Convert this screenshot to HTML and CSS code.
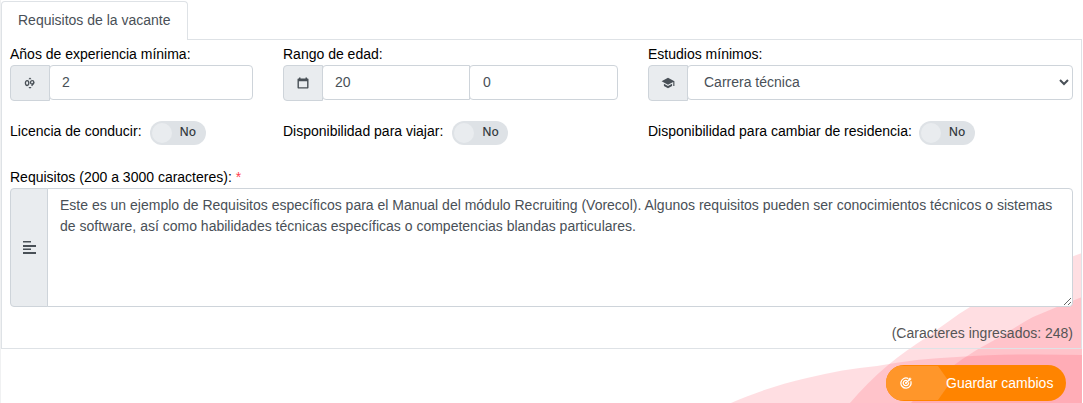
FILE: index.html
```html
<!DOCTYPE html>
<html lang="es">
<head>
<meta charset="utf-8">
<title>Requisitos de la vacante</title>
<link rel="stylesheet" href="styles.css">
</head>
<body>
<div class="page">
  <svg class="backdrop" viewBox="0 0 361 163" aria-hidden="true">
    <path d="M129 163C140 150 153 137 166 126C179 115 192 106 206 97C220 87 234 76 249 67C283 46 321 27 361 13V163Z"/>
    <path d="M10 163C35 152 60 144 86 138C110 132 133 128 156 126C182 121 210 118 236 117C278 114 320 114 361 115V163Z"/>
    <path d="M190 163C205 147 220 134 236 123C244 117 251 113 259 108L279 97C290 90 301 83 312 77L336 67L361 57V163Z"/>
  </svg>
  <div class="tabs"><a class="tab">Requisitos de la vacante</a></div>
  <main class="panel">
    <div class="fields">
      <div class="field years">
        <label>Años de experiencia mínima:</label>
        <div class="group">
          <span class="addon"><svg class="ico" viewBox="0 0 12 12"><path d="M4.400 2.200L6 .6l1.600 1.600zM4.400 10.100h3.200L6 11.700z"/><g fill="none" stroke="currentColor" stroke-width="1.300"><ellipse cx="3.100" cy="6.100" rx="1.700" ry="2.400"/><circle cx="8.200" cy="5.400" r="1.700"/><path d="M9.900 5.400L7.700 8.900"/></g></svg></span>
          <input class="control" value="2">
        </div>
      </div>
      <div class="field age">
        <label>Rango de edad:</label>
        <div class="group">
          <span class="addon"><svg class="ico" viewBox="0 0 12 12"><path fill-rule="evenodd" d="M2 .5h1.500v1h5v-1H10v1h.5c.6 0 1 .4 1 1v8c0 .6-.4 1-1 1h-9c-.6 0-1-.4-1-1v-8c0-.6.4-1 1-1H2zM1.900 4.300v5.900h8.200V4.300z"/></svg></span>
          <input class="control" value="20"><input class="control second" value="0">
        </div>
      </div>
      <div class="field studies">
        <label>Estudios mínimos:</label>
        <div class="group">
          <span class="addon"><svg class="ico grad" viewBox="0 0 24 24"><path d="M5 13.180v4L12 21l7-3.820v-4L12 17zM12 3L1 9l11 6 9-4.910V17h2V9z"/></svg></span>
          <select class="control"><option>Carrera técnica</option></select>
        </div>
      </div>
      <div class="toggle-row"><span>Licencia de conducir:</span><span class="switch"><i class="knob"></i><b>No</b></span></div>
      <div class="toggle-row wide-gap"><span>Disponibilidad para viajar:</span><span class="switch"><i class="knob"></i><b>No</b></span></div>
      <div class="toggle-row tight-gap"><span>Disponibilidad para cambiar de residencia:</span><span class="switch"><i class="knob"></i><b>No</b></span></div>
    </div>
    <div class="requirements">
      <label>Requisitos (200 a 3000 caracteres): <span class="required">*</span></label>
      <div class="group tall">
        <span class="addon"><svg class="lines" viewBox="0 0 13 13"><path d="M0 0h8v1.500H0zM0 4h13v2H0zM0 7.500h8V9H0zM0 11h13v2H0z"/></svg></span>
        <textarea class="control">Este es un ejemplo de Requisitos específicos para el Manual del módulo Recruiting (Vorecol). Algunos requisitos pueden ser conocimientos técnicos o sistemas de software, así como habilidades técnicas específicas o competencias blandas particulares.</textarea>
      </div>
      <div class="count">(Caracteres ingresados: 248)</div>
    </div>
  </main>
  <div class="actions">
    <button class="save"><span class="save-icon"><svg viewBox="0 0 13 13"><g fill="none" stroke="#fff" stroke-width="1.400"><path d="M9 1.700A5.500 5.500 0 1 0 11.600 4.600"/><path d="M7.800 4A2.900 2.900 0 1 0 9.200 5.800"/><path d="M6.300 6.700L10.300 2.700"/></g><path fill="#fff" d="M9.300 3.700V2L11 .3l.4 1.300 1.300.4L11 3.700zM5.400 6.500a1 1 0 1 0 2 0 1 1 0 0 0-2 0"/></svg></span><span class="save-text">Guardar cambios</span></button>
  </div>
</div>
</body>
</html>
```
FILE: styles.css
```css
* { box-sizing: border-box; }
body {
  margin: 0;
  background: #fff;
  color: #000;
  font: 14px/21px "Liberation Sans", Arial, sans-serif;
  overflow: hidden;
}
.page {
  position: relative;
  width: 1082px;
  height: 403px;
  padding: 1px 0 0 1px;
  box-shadow: inset 1px 0 #f0f1f2;
}
.backdrop {
  position: absolute;
  z-index: -1;
  right: 0;
  bottom: 0;
  width: 361px;
  height: 163px;
  fill: #ff4960;
  fill-opacity: .18;
}
.tabs { display: flex; height: 38px; }
.tab {
  height: 39px;
  width: 187px;
  padding: 8px 16px;
  border: 1px solid #dee2e6;
  border-bottom: 0;
  border-radius: 4px 4px 0 0;
  background: #fff;
  color: #495057;
  position: relative;
}
.panel {
  height: 310px;
  padding: 4px 8px 0;
  border: 1px solid #dee2e6;
}
.fields {
  display: grid;
  grid-template-columns: 243px 335px 425px;
  column-gap: 30px;
}
label { display: block; height: 21px; }
.group { display: flex; height: 36px; }
.addon {
  display: flex;
  flex: none;
  align-items: center;
  justify-content: center;
  width: 40px;
  border: 1px solid #ced4da;
  border-radius: 4px 0 0 4px;
  background: #e9ecef;
  color: #495057;
}
.ico { width: 12px; height: 12px; fill: currentColor; }
.grad { width: 14px; height: 14px; }
.control {
  flex: 1;
  min-width: 0;
  height: 35px;
  margin-left: -1px;
  padding: 6px 12px;
  border: 1px solid #ced4da;
  border-radius: 4px;
  background: #fff;
  color: #495057;
  font: inherit;
}
.field .control { padding: 5px 12px 7px; }
.field .second { padding-left: 13px; }
.age .control:nth-child(2) { flex: 0 0 148px; border-radius: 4px 0 0 4px; }
.toggle-row {
  display: flex;
  gap: 8px;
  height: 24px;
  margin-top: 20px;
  white-space: nowrap;
}
.wide-gap { gap: 9px; }
.tight-gap { gap: 7px; }
.switch {
  display: flex;
  align-items: center;
  gap: 9px;
  width: 56px;
  height: 24px;
  padding: 0 2px;
  border-radius: 12px;
  background: #dee2e6;
}
.knob {
  width: 20px;
  height: 20px;
  border-radius: 50%;
  background: #e9ecef;
}
.switch b {
  height: 24px;
  margin-left: -1px;
  color: #343a40;
  font: 500 12px/22px "Noto Sans", sans-serif;
}
.requirements { margin-top: 22px; }
.required { color: #ff3b4e; }
.tall { height: 119px; }
.tall .addon { width: 38px; }
.tall .control { height: 119px; border-radius: 0 4px 4px 0; }
.lines { width: 13px; height: 13px; fill: currentColor; }
.count { margin-top: 16px; color: #555; text-align: right; }
.actions {
  display: flex;
  justify-content: flex-end;
  padding: 16px 16px 0;
}
.save {
  display: flex;
  width: 180px;
  height: 36px;
  padding: 1px 0;
  overflow: hidden;
  border: 0;
  border-radius: 18px;
  background: #ff8400;
  color: #fff;
  font: inherit;
}
.save-icon {
  display: flex;
  align-items: center;
  width: 64px;
  height: 34px;
  padding-left: 14px;
  background: #ff962a;
  clip-path: polygon(0 0, 52px 0, 100% 50%, 52px 100%, 0 100%);
}
.save-icon svg { width: 12px; height: 12px; }
.save-text { position: relative; z-index: 1; margin-left: -4px; line-height: 34px; }
```
